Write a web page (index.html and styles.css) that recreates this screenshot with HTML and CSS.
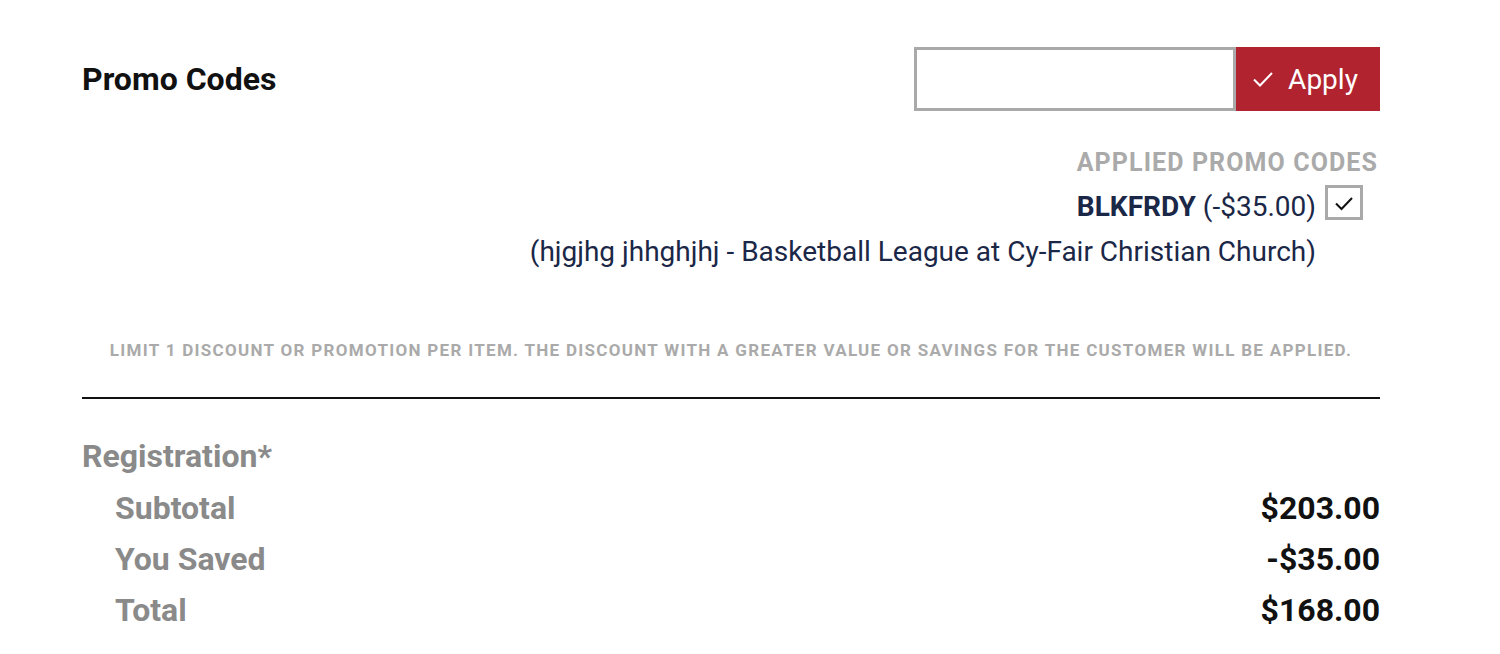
FILE: index.html
```html
<!DOCTYPE html>
<html lang="en">
<head>
  <meta charset="UTF-8">
  <meta name="viewport" content="width=device-width, initial-scale=1.0">
  <title>Promo Codes</title>
  <link rel="stylesheet" href="styles.css">
</head>
<body>
  <div class="container">
    <div class="promo-head">
      <h2>Promo Codes</h2>
      <form class="promo-form" onsubmit="return false;">
        <input type="text" class="promo-input" aria-label="Promo code">
        <button class="apply-btn">
          <svg width="22" height="18" viewBox="0 0 22 18"><path d="M2 9.5 L8 15.5 L20 3" fill="none" stroke="#fff" stroke-width="2"/></svg>
          Apply
        </button>
      </form>
    </div>

    <div class="applied">
      <div class="applied-title">Applied Promo Codes</div>
      <div class="applied-row">
        <div class="applied-text">
          <div class="code-line"><strong>BLKFRDY</strong> (-$35.00)</div>
          <div class="code-desc">(hjgjhg jhhghjhj - Basketball League at Cy-Fair Christian Church)</div>
        </div>
        <span class="code-check">
          <svg width="22" height="18" viewBox="0 0 22 18"><path d="M3 9.5 L8.5 15 L19 4" fill="none" stroke="#111" stroke-width="2"/></svg>
        </span>
      </div>
    </div>

    <p class="disclaimer">Limit 1 discount or promotion per item. The discount with a greater value or savings for the customer will be applied.</p>

    <hr class="divider">

    <div class="summary">
      <div class="summary-title">Registration*</div>
      <div class="summary-row"><span>Subtotal</span><span class="amount">$203.00</span></div>
      <div class="summary-row"><span>You Saved</span><span class="amount">-$35.00</span></div>
      <div class="summary-row"><span>Total</span><span class="amount">$168.00</span></div>
    </div>
  </div>
</body>
</html>
```

FILE: styles.css
```css
:root {
  --red: #b1232f;
  --navy: #1b2747;
  --gray: #8a8a8a;
  --light-gray: #aaaaaa;
}
body {
  margin: 0;
  font-family: Roboto, "Noto Sans", sans-serif;
  background: #fff;
  color: #111;
}
.container { width: 1298px; margin-left: 82px; padding-top: 47px; }

.promo-head { display: flex; justify-content: space-between; align-items: center; }
.promo-head h2 { margin: 0; font-size: 32px; font-weight: 700; color: #111; }
.promo-form { display: flex; }
.promo-input {
  width: 316px; height: 58px; box-sizing: content-box;
  border: 3px solid #a9a9a9; padding: 0; margin: 0; outline: none;
}
.apply-btn {
  width: 144px; height: 64px; border: none; margin: 0;
  background: var(--red); color: #fff;
  font-family: inherit; font-size: 28px;
  display: flex; align-items: center; justify-content: center; gap: 14px;
  padding: 0 6px 0 0; cursor: pointer;
}

.applied { display: flex; flex-direction: column; align-items: flex-end; margin-top: 37px; }
.applied-title {
  font-size: 25px; font-weight: 700; text-transform: uppercase;
  color: var(--light-gray); letter-spacing: 1.1px; margin-right: 2px; line-height: 30px;
}
.applied-row { display: flex; align-items: flex-start; gap: 9px; margin-right: 17px; margin-top: 6px; }
.applied-text { display: flex; flex-direction: column; align-items: flex-end; }
.code-line, .code-desc { font-size: 28px; color: var(--navy); line-height: 45px; }
.code-line strong { font-weight: 700; }
.code-check {
  width: 32px; height: 29px; border: 3px solid #a9a9a9;
  display: flex; align-items: center; justify-content: center; margin-top: 1px;
}

.disclaimer {
  margin: 66px 0 0; text-align: center;
  font-size: 17px; font-weight: 700; text-transform: uppercase;
  color: var(--light-gray); letter-spacing: 1.3px; line-height: 20px;
}
.divider { border: none; border-top: 2px solid #111; margin: 37px 0 0; }

.summary { margin-top: 30px; }
.summary-title { font-size: 32px; font-weight: 700; color: var(--gray); line-height: 54px; }
.summary-row {
  display: flex; justify-content: space-between;
  font-size: 32px; font-weight: 700; color: var(--gray);
  padding-left: 33px; line-height: 51px;
}
.summary-row .amount { color: #111; }
```
